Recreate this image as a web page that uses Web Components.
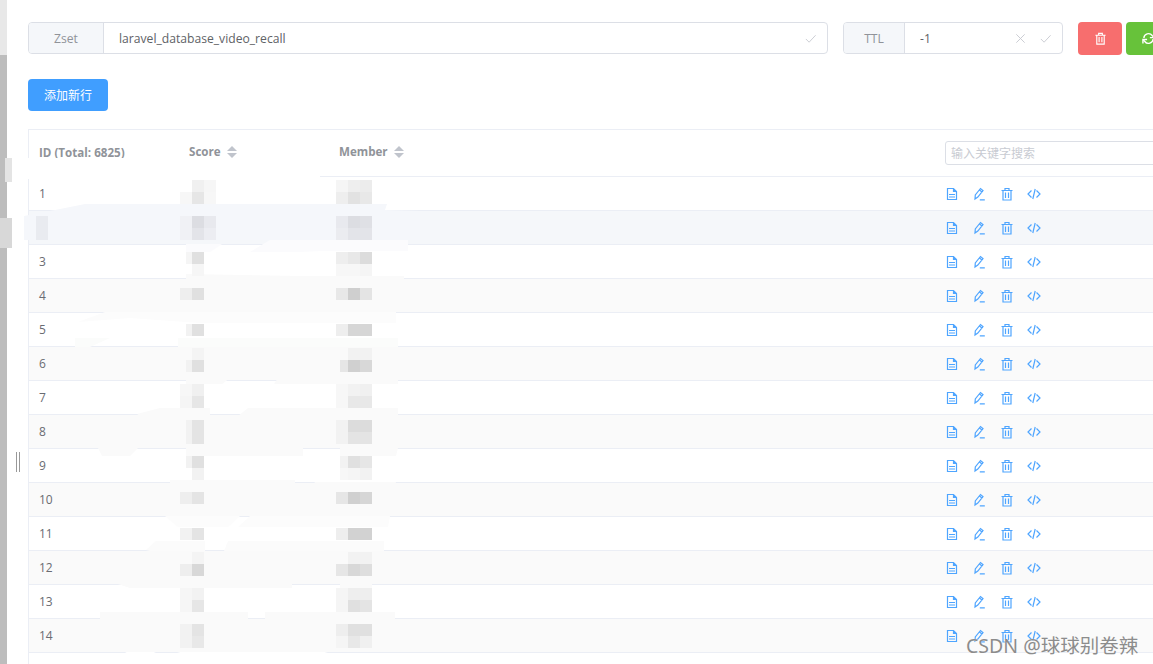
<!DOCTYPE html>
<html lang="zh">
<head>
<meta charset="utf-8">
<title>Zset</title>
<style>
    html, body { margin: 0; height: 664px; overflow: hidden; background: #fff; }
</style>
</head>
<body>
<key-page></key-page>
<script>
const UI_FONT = '"Open Sans", "Noto Sans CJK SC", sans-serif';

const ICONS = {
    check: '<path d="M2 7.5 5.5 11 12.5 3.5" fill="none" stroke="currentColor"/>',
    close: '<path d="M2.5 2.5 11.5 11.5M11.5 2.5 2.5 11.5" fill="none" stroke="currentColor"/>',
    trash: '<path d="M1.5 3.5h11M5 3.5V1.5h4v2M3 3.5v9.5h8V3.5M5.5 5.5v5.5M8.5 5.5v5.5" fill="none" stroke="currentColor" stroke-width="1.2"/>',
    refresh: '<path d="M2 6.5A5 5 0 0 1 11 3.8L12.5 5.5M12 7.5A5 5 0 0 1 3 10.2L1.5 8.5" fill="none" stroke="currentColor" stroke-width="1.5"/><path d="M13 1.5v4.5H8.5M1 12.5V8h4.5" fill="none" stroke="currentColor" stroke-width="1.5"/>',
    doc: '<path d="M2.5 1.5h6l3 3v8h-9zM8.5 1.5v3h3M4 7.5h6M4 10h6" fill="none" stroke="currentColor" stroke-width="1.2"/>',
    pencil: '<path d="M3 12 3.300 8 8.500 1.500 11 3.500 5.800 10zM7.800 12.800h5M7.500 3 10 5" fill="none" stroke="currentColor" stroke-width="1.2"/>',
    code: '<path d="M4.500 3.500 1 7l3.500 3.500M9.500 3.500 13 7l-3.500 3.500M8.200 2 5.800 12" fill="none" stroke="currentColor" stroke-width="1.2"/>'
};

class AppIcon extends HTMLElement {
    constructor() {
        super();
        this.attachShadow({ mode: "open" });
    }

    connectedCallback() {
        const name = this.getAttribute("name");
        const size = this.getAttribute("size") || 14;
        this.shadowRoot.innerHTML = `
            <style>
            :host { display: inline-flex; width: ${size}px; height: ${size}px; }
            svg { display: block; width: 100%; height: 100%; }
            </style>
            <svg viewBox="0 0 14 14">${ICONS[name] || ""}</svg>
        `;
    }
}

class ScrollRail extends HTMLElement {
    constructor() {
        super();
        this.attachShadow({ mode: "open" });
        this.shadowRoot.innerHTML = `
            <style>
            :host { display: block; flex: none; width: 8px; height: 664px; position: relative; }
            .track { width: 7px; height: 100%; background: #e8e8e8; display: flex; flex-direction: column; }
            .thumb { margin-top: 55px; flex: 1; background: #bdbdbd; }
            .nub { position: absolute; background: #e4e4e4; }
            .a { left: 5px; top: 158px; width: 7px; height: 24px; }
            .b { left: 0; top: 218px; width: 12px; height: 30px; background: #d8d8d8; }
            .grip { position: absolute; left: 16px; top: 452px; width: 2px; height: 20px; border-left: 1px solid #999; border-right: 1px solid #999; }
            </style>
            <div class="track"><div class="thumb"></div></div>
            <div class="nub a"></div>
            <div class="nub b"></div>
            <div class="grip"></div>
        `;
    }
}

class InputGroup extends HTMLElement {
    constructor() {
        super();
        this.attachShadow({ mode: "open" });
    }

    connectedCallback() {
        const label = this.getAttribute("label");
        const labelWidth = this.getAttribute("label-width") || 75;
        const value = this.getAttribute("value");
        this.shadowRoot.innerHTML = `
            <style>
            :host { display: flex; box-sizing: border-box; height: 32px; border: 1px solid #dcdfe6; border-radius: 4px; font: 12.15px ${UI_FONT}; overflow: hidden; }
            .label { flex: none; width: ${labelWidth - 1}px; display: flex; align-items: center; justify-content: center; background: #f5f7fa; color: #909399; border-right: 1px solid #dcdfe6; }
            .value { flex: 1; display: flex; align-items: center; padding-left: 15px; color: #606266; }
            .icons { display: flex; align-items: center; gap: 12px; padding-right: 10px; color: #c8cad0; }
            </style>
            <div class="label">${label}</div>
            <div class="value">${value}</div>
            <div class="icons"><slot></slot></div>
        `;
    }
}

class ActionButton extends HTMLElement {
    constructor() {
        super();
        this.attachShadow({ mode: "open" });
        this.shadowRoot.innerHTML = `
            <style>
            :host { display: flex; flex: none; align-items: center; justify-content: center; box-sizing: border-box; height: 33px; width: 44px; border-radius: 4px; color: #fff; background: var(--btn, #409eff); font: 12px ${UI_FONT}; }
            </style>
            <slot></slot>
        `;
    }
}

class SortHead extends HTMLElement {
    constructor() {
        super();
        this.attachShadow({ mode: "open" });
        this.shadowRoot.innerHTML = `
            <style>
            :host { display: flex; align-items: center; gap: 6px; padding-left: 10px; padding-bottom: 4px; color: #909399; font-weight: 700; font-size: 11.6px; }
            .carets { display: flex; flex-direction: column; gap: 2px; margin-top: 2px; }
            i { display: block; width: 0; height: 0; border-left: 5px solid transparent; border-right: 5px solid transparent; }
            .up { border-bottom: 5px solid #c0c4cc; }
            .down { border-top: 5px solid #c0c4cc; }
            </style>
            <slot></slot>
            <span class="carets"><i class="up"></i><i class="down"></i></span>
        `;
    }
}

class ZsetRow extends HTMLElement {
    constructor() {
        super();
        this.attachShadow({ mode: "open" });
    }

    connectedCallback() {
        const id = this.getAttribute("row-id");
        this.shadowRoot.innerHTML = `
            <style>
            :host { display: grid; grid-template-columns: 150px 150px 606px 1fr; box-sizing: border-box; height: 34px; align-items: center; border-bottom: 1px solid #ebeef5; background: var(--row-bg, #fff); color: #6a6c72; font: 12px ${UI_FONT}; }
            .id { padding-left: 10px; }
            .actions { grid-column: 4; display: flex; gap: 13.3px; padding-left: 10px; color: #4ea5ff; }
            </style>
            <div class="id">${id}</div>
            <div></div>
            <div></div>
            <div class="actions">
                <app-icon name="doc"></app-icon>
                <app-icon name="pencil"></app-icon>
                <app-icon name="trash"></app-icon>
                <app-icon name="code"></app-icon>
            </div>
        `;
    }
}

// the redacted columns: pixel blocks and white brush marks painted over the table
const MOSAIC = [
    [192,180,"f0f0f0"],[204,180,"f6f6f6"],[180,192,"f7f7f7"],[192,192,"e6e6e6"],[204,192,"f7f7f7"],
    [336,180,"f5f5f5"],[348,180,"eeeeee"],[360,180,"ececec"],[336,192,"eeeeee"],[348,192,"e2e2e2"],[360,192,"e8e8e8"],
    [180,216,"f0f1f5"],[192,216,"dcdde2"],[204,216,"e8e9ee"],[180,228,"f0f1f5"],[192,228,"e3e4e9"],[204,228,"ecedf2"],
    [336,216,"e8e9ee"],[348,216,"dcdde2"],[360,216,"dfe0e5"],[336,228,"ebecf0"],[348,228,"e3e4e9"],[360,228,"e3e4e9"],
    [36,216,"e9ebf0"],[36,228,"e9ebf0"],
    [186,252,"f5f5f5"],[192,252,"e0e0e0"],[192,264,"f6f6f6"],
    [336,252,"eeeeee"],[348,252,"e8e8e8"],[360,252,"dcdcdc"],[336,264,"f7f7f7"],[348,264,"f7f7f7"],[360,264,"f5f5f5"],
    [180,288,"eeeeee"],[192,288,"e0e0e0"],[336,288,"e8e8e8"],[348,288,"cfcfcf"],[360,288,"e4e4e4"],
    [186,324,"f2f2f2"],[192,324,"e0e0e0"],[336,324,"eeeeee"],[348,324,"d6d6d6"],[360,324,"d6d6d6"],
    [192,348,"f4f4f4"],[186,360,"f2f2f2"],[192,360,"e0e0e0"],[348,348,"f2f2f2"],[360,348,"f2f2f2"],[340,360,"e6e6e6"],[348,360,"d0d0d0"],[360,360,"d8d8d8"],
    [180,384,"f7f7f7"],[192,384,"f0f0f0"],[180,396,"f5f5f5"],[192,396,"e6e6e6"],[336,384,"f7f7f7"],[348,384,"f2f2f2"],[360,384,"f0f0f0"],[336,396,"f7f7f7"],[348,396,"e8e8e8"],[360,396,"e8e8e8"],
    [186,420,"f2f2f2"],[192,420,"e4e4e4"],[186,432,"f2f2f2"],[192,432,"e4e4e4"],[336,420,"f2f2f2"],[348,420,"dcdcdc"],[360,420,"dcdcdc"],[336,432,"f2f2f2"],[348,432,"e4e4e4"],[360,432,"e4e4e4"],
    [186,456,"f2f2f2"],[192,456,"e0e0e0"],[192,468,"f2f2f2"],[340,456,"f2f2f2"],[348,456,"e0e0e0"],[360,456,"e6e6e6"],[340,468,"f7f7f7"],[348,468,"f5f5f5"],[360,468,"f2f2f2"],
    [180,492,"eeeeee"],[192,492,"e4e4e4"],[336,492,"e6e6e6"],[348,492,"d0d0d0"],[360,492,"d6d6d6"],
    [180,528,"f2f2f2"],[192,528,"e4e4e4"],[336,528,"eeeeee"],[348,528,"d2d2d2"],[360,528,"d2d2d2"],
    [192,552,"f4f4f4"],[180,564,"eeeeee"],[192,564,"d8d8d8"],[348,552,"f2f2f2"],[360,552,"f2f2f2"],[336,564,"e6e6e6"],[348,564,"d8d8d8"],[360,564,"dedede"],
    [180,588,"f6f6f6"],[192,588,"f2f2f2"],[180,600,"f6f6f6"],[192,600,"e6e6e6"],[336,588,"f5f5f5"],[348,588,"eeeeee"],[360,588,"eeeeee"],[336,600,"f5f5f5"],[348,600,"e0e0e0"],[360,600,"e4e4e4"],
    [180,624,"f2f2f2"],[192,624,"e4e4e4"],[180,636,"f2f2f2"],[192,636,"e8e8e8"],[336,624,"eeeeee"],[348,624,"e0e0e0"],[360,624,"e0e0e0"],[336,636,"f5f5f5"],[348,636,"e8e8e8"],[360,636,"f0f0f0"]
];

const BRUSH = [
    ["#ffffff", "24,158 240,158 320,176 320,179 24,179"],
    ["#f5f7fb", "24,216 55,210 85,204 387,204 385,210 420,211 420,240 330,240 300,244 260,240 24,240"],
    ["#fbfbfd", "186,244 222,244 210,252 186,252"],
    ["#fbfbfd", "250,252 270,240 408,240 408,251 322,251 300,252"],
    ["#fafafa", "186,274 300,276 404,276 404,285 186,285"],
    ["#fcfcfc", "78,322 105,312 180,312 396,312 396,323 200,323 130,318"],
    ["#fbfcfb", "75,338 110,338 90,347 75,347"],
    ["#fbfcfb", "178,338 398,338 398,347 178,347"],
    ["#fafafa", "186,378 230,378 222,384 186,384"],
    ["#fafafa", "278,378 398,378 398,384 274,384"],
    ["#fafafa", "137,414 160,408 210,408 210,416 185,416 140,416"],
    ["#fafafa", "238,416 248,408 398,408 398,416"],
    ["#fafafa", "98,448 138,448 130,456 102,456"],
    ["#fafafa", "186,448 303,448 303,456 186,456"],
    ["#fafafa", "340,448 398,448 396,456 340,456"],
    ["#fafafa", "170,480 295,480 295,487 170,490"],
    ["#fafafa", "315,482 396,482 394,490 310,490"],
    ["#fcfcfc", "165,516 240,516 228,527 178,527"],
    ["#fcfcfc", "250,516 390,516 388,527 238,527"],
    ["#fbfbfb", "146,550 156,541 205,541 205,551 150,551"],
    ["#fbfbfb", "228,541 384,541 384,551 224,551"],
    ["#fafafa", "118,584 292,584 292,588 130,588"],
    ["#fafafa", "340,584 372,584 372,590 340,590"],
    ["#fafafa", "100,612 248,612 248,619 100,619"],
    ["#fafafa", "265,612 395,612 395,619 265,619"],
    ["#ffffff", "125,652 156,652 138,660"],
    ["#ffffff", "177,652 328,652 300,660 205,660"]
];

class BlurMask extends HTMLElement {
    constructor() {
        super();
        this.attachShadow({ mode: "open" });
        const brush = BRUSH.map(([c, p]) => `<polygon fill="${c}" points="${p}"/>`).join("");
        const cells = MOSAIC.map(([x, y, c]) => `<rect x="${x}" y="${y}" width="${12 - x % 12}" height="12" fill="#${c}"/>`).join("");
        this.shadowRoot.innerHTML = `
            <style>
            :host { position: absolute; left: -1px; top: -1px; pointer-events: none; }
            svg { display: block; overflow: visible; }
            </style>
            <svg width="400" height="535" viewBox="28 129 400 535">${brush}${cells}</svg>
        `;
    }
}

class ZsetTable extends HTMLElement {
    constructor() {
        super();
        this.attachShadow({ mode: "open" });
    }

    connectedCallback() {
        let rows = "";
        for (let i = 1; i <= 14; i++) {
            const bg = i === 2 ? "#f5f7fa" : i % 2 === 0 ? "#fafafa" : "#fff";
            rows += `<zset-row row-id="${i === 2 ? "" : i}" style="--row-bg:${bg}"></zset-row>`;
        }
        this.shadowRoot.innerHTML = `
            <style>
            :host { display: block; position: relative; box-sizing: border-box; margin-top: 18px; height: 535px; border-top: 1px solid #ebeef5; border-left: 1px solid #ebeef5; font-family: ${UI_FONT}; }
            .head { display: grid; grid-template-columns: 150px 150px 606px 1fr; align-items: center; box-sizing: border-box; height: 47px; border-bottom: 1px solid #ebeef5; }
            .id { padding-left: 10px; padding-bottom: 2px; color: #909399; font-weight: 700; font-size: 11.6px; }
            .search { margin-left: 10px; box-sizing: border-box; height: 24px; border: 1px solid #dcdfe6; border-radius: 3px; padding-left: 5px; display: flex; align-items: center; color: #c8cbd2; font-size: 12px; }
            </style>
            <div class="head">
                <div class="id">ID (Total: 6825)</div>
                <sort-head>Score</sort-head>
                <sort-head>Member</sort-head>
                <div class="search">输入关键字搜索</div>
            </div>
            ${rows}
            <blur-mask></blur-mask>
        `;
    }
}

class KeyPage extends HTMLElement {
    constructor() {
        super();
        this.attachShadow({ mode: "open" });
        this.shadowRoot.innerHTML = `
            <style>
            :host { display: flex; width: 1153px; height: 664px; overflow: hidden; position: relative; font-family: ${UI_FONT}; }
            main { flex: none; width: 1142px; margin-left: 20px; padding-top: 22px; }
            .top { display: flex; align-items: flex-start; }
            .key { flex: 1; }
            .ttl { flex: none; width: 220px; margin: 0 15px; }
            .del { --btn: #f76e6e; margin-right: 4px; }
            .refresh { --btn: #67c23a; }
            .add { --btn: #409eff; width: 80px; height: 32px; margin-top: 24px; font-size: 12px; }
            .mark { position: absolute; left: 966px; top: 630px; font: 19.5px "Noto Sans", "Noto Sans CJK SC", sans-serif; color: #8c8c8c; text-shadow: 0 0 1px #fff; white-space: nowrap; }
            </style>
            <scroll-rail></scroll-rail>
            <main>
                <div class="top">
                    <input-group class="key" label="Zset" value="laravel_database_video_recall">
                        <app-icon name="check" size="13"></app-icon>
                    </input-group>
                    <input-group class="ttl" label="TTL" label-width="61" value="-1">
                        <app-icon name="close" size="13"></app-icon>
                        <app-icon name="check" size="13"></app-icon>
                    </input-group>
                    <action-button class="del"><app-icon name="trash" size="13"></app-icon></action-button>
                    <action-button class="refresh"><app-icon name="refresh" size="13"></app-icon></action-button>
                </div>
                <action-button class="add">添加新行</action-button>
                <zset-table></zset-table>
            </main>
            <div class="mark">CSDN @球球别卷辣</div>
        `;
    }
}

customElements.define("app-icon", AppIcon);
customElements.define("scroll-rail", ScrollRail);
customElements.define("input-group", InputGroup);
customElements.define("action-button", ActionButton);
customElements.define("sort-head", SortHead);
customElements.define("zset-row", ZsetRow);
customElements.define("blur-mask", BlurMask);
customElements.define("zset-table", ZsetTable);
customElements.define("key-page", KeyPage);
</script>
</body>
</html>
